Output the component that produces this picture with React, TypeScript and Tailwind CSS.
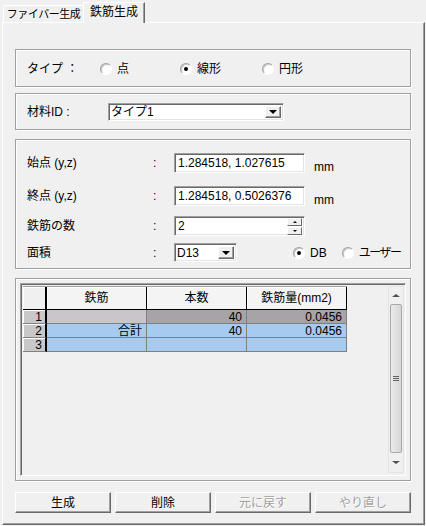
import React from 'react'

const font = "font-['Liberation_Sans','Noto_Sans_CJK_JP',sans-serif]"

/* Etched group frame used by every section */
function Group({ className = '', children }: { className?: string; children: React.ReactNode }) {
  return (
    <div
      className={`w-[396px] border border-[#a0a0a0] shadow-[inset_1px_1px_0_#ffffff,1px_1px_0_#ffffff] ${className}`}
    >
      {children}
    </div>
  )
}

function Radio({ checked = false, label, tight = false }: { checked?: boolean; label: string; tight?: boolean }) {
  return (
    <div className="flex items-center gap-[5px]">
      <div className="w-[12px] h-[12px] rounded-full border border-[#a0a0a0] border-b-white border-r-white bg-white shadow-[inset_1px_1px_0_#c8c8c8] flex items-center justify-center">
        {checked && <div className="w-[4px] h-[4px] rounded-full bg-black" />}
      </div>
      <span className={tight ? 'tracking-[-1.5px] whitespace-nowrap' : 'whitespace-nowrap'}>{label}</span>
    </div>
  )
}

/* Sunken white edit box */
function Sunken({ className = '', children }: { className?: string; children?: React.ReactNode }) {
  return (
    <div
      className={`bg-white border border-[#a0a0a0] border-b-white border-r-white shadow-[inset_1px_1px_0_#696969,inset_-1px_-1px_0_#e3e3e3] flex items-center ${className}`}
    >
      {children}
    </div>
  )
}

function DropButton() {
  return (
    <div className="w-[16px] self-stretch my-[2px] mr-[2px] bg-[#f0f0f0] border border-white border-b-[#696969] border-r-[#696969] shadow-[inset_-1px_-1px_0_#a0a0a0] flex items-center justify-center">
      <div className="w-0 h-0 border-l-[4px] border-r-[4px] border-t-[4px] border-l-transparent border-r-transparent border-t-black" />
    </div>
  )
}

function Combo({ className = '', value }: { className?: string; value: string }) {
  return (
    <Sunken className={className}>
      <span className="flex-1 pl-[2px] leading-none">{value}</span>
      <DropButton />
    </Sunken>
  )
}

function Btn({ label, disabled = false }: { label: string; disabled?: boolean }) {
  return (
    <div
      className={`w-[96px] h-[21px] bg-[#f0f0f0] border border-white border-b-[#696969] border-r-[#696969] shadow-[inset_-1px_-1px_0_#a0a0a0] flex items-center justify-center ${
        disabled ? 'text-[#a0a0a0] [text-shadow:1px_1px_0_#ffffff]' : 'text-black'
      }`}
    >
      {label}
    </div>
  )
}

const rows = [
  { n: '1', a: '', b: '40', c: '0.0456', kind: 'gray' },
  { n: '2', a: '合計', b: '40', c: '0.0456', kind: 'blue' },
  { n: '3', a: '', b: '', c: '', kind: 'blue' },
]

function Grid() {
  return (
    <div className="grid grid-cols-[24px_100px_100px_100px] grid-rows-[23px_14px_14px_14px] border-t border-[#a0a0a0] text-[12px] leading-none">
      <div className="bg-[#f0f0f0] border-r-2 border-b border-black shadow-[inset_1px_1px_0_#ffffff]" />
      {['鉄筋', '本数', '鉄筋量(mm2)'].map((h) => (
        <div
          key={h}
          className="bg-[#f4f4f4] border-r border-b border-black shadow-[inset_1px_1px_0_#ffffff] flex items-center justify-center"
        >
          {h}
        </div>
      ))}
      {rows.map((r) => (
        <React.Fragment key={r.n}>
          <div className="bg-[#c8c8c8] border-r-2 border-r-black border-b border-b-[#808080] shadow-[inset_1px_1px_0_#ffffff] flex items-center justify-end pr-[3px]">
            {r.n}
          </div>
          <div
            className={`border-r border-b border-[#808080] flex items-center justify-end pr-[4px] ${
              r.kind === 'gray' ? 'bg-[#c8c6c8]' : 'bg-[#a6caf0]'
            }`}
          >
            {r.a}
          </div>
          <div
            className={`border-r border-b border-[#808080] flex items-center justify-end pr-[4px] ${
              r.kind === 'gray' ? 'bg-[#a6a4a6]' : 'bg-[#a6caf0]'
            }`}
          >
            {r.b}
          </div>
          <div
            className={`border-r border-b border-[#808080] flex items-center justify-end pr-[4px] ${
              r.kind === 'gray' ? 'bg-[#a6a4a6]' : 'bg-[#a6caf0]'
            }`}
          >
            {r.c}
          </div>
        </React.Fragment>
      ))}
    </div>
  )
}

function ScrollBar() {
  return (
    <div className="w-[16px] self-stretch flex flex-col border border-[#e3e3e3] bg-[#f0f0f0]">
      <div className="h-[17px] flex items-center justify-center">
        <div className="w-0 h-0 border-l-[4px] border-r-[4px] border-b-[3px] border-l-transparent border-r-transparent border-b-[#505050]" />
      </div>
      <div className="flex-1 mx-px rounded-[2px] border border-[#a8a8a8] bg-gradient-to-r from-[#eaeaea] to-[#d6d6d6] flex flex-col items-center justify-center gap-[1px]">
        <div className="w-[6px] h-px bg-[#606060]" />
        <div className="w-[6px] h-px bg-[#606060]" />
        <div className="w-[6px] h-px bg-[#606060]" />
      </div>
      <div className="h-[19px] flex items-center justify-center">
        <div className="w-0 h-0 border-l-[4px] border-r-[4px] border-t-[3px] border-l-transparent border-r-transparent border-t-[#505050]" />
      </div>
    </div>
  )
}

function FieldRow({ label, children }: { label: string; children: React.ReactNode }) {
  return (
    <div className="flex items-center">
      <span className="w-[126px]">{label}</span>
      <span className="w-[21px]">:</span>
      {children}
    </div>
  )
}

export default function App() {
  return (
    <div className={`w-[426px] h-[526px] bg-[#f0f0f0] text-[12px] text-black ${font} overflow-hidden`}>
      {/* Tabs */}
      <div className="h-[22px] flex items-end pl-[3px]">
        <div className="w-[80px] h-[17px] border-t border-l border-white flex items-center justify-center whitespace-nowrap text-[11px] tracking-[-0.5px]">
          ファイバー生成
        </div>
        <div className="relative z-10 -mb-px w-[62px] h-[21px] bg-[#f0f0f0] border-t border-l border-white border-r border-r-[#696969] shadow-[inset_-1px_0_0_#a0a0a0] flex items-center justify-center pb-[2px] whitespace-nowrap">
          鉄筋生成
        </div>
      </div>

      {/* Tab page */}
      <div className="ml-[2px] w-[423px] h-[503px] border border-white border-r-[#696969] border-b-[#696969] shadow-[inset_-1px_-1px_0_#a0a0a0] flex flex-col pl-[12px] pt-[26px]">
        <Group className="h-[38px] flex items-center pl-[11px] pt-[2px]">
          <span className="w-[73px]">タイプ ：</span>
          <div className="w-[80px]">
            <Radio label="点" />
          </div>
          <div className="w-[82px]">
            <Radio checked label="線形" />
          </div>
          <Radio label="円形" />
        </Group>

        <Group className="mt-[6px] h-[37px] flex items-center pl-[11px]">
          <span className="w-[81px]">材料ID :</span>
          <Combo className="w-[176px] h-[18px]" value="タイプ1" />
        </Group>

        <Group className="mt-[9px] h-[130px] flex flex-col pl-[11px] pt-[9px]">
          <FieldRow label="始点 (y,z)">
            <Sunken className="w-[131px] h-[20px] pl-[3px]">1.284518, 1.027615</Sunken>
            <span className="ml-[9px] mt-[9px]">mm</span>
          </FieldRow>
          <div className="mt-[6px]">
            <FieldRow label="終点 (y,z)">
              <Sunken className="w-[131px] h-[20px] pl-[3px]">1.284518, 0.5026376</Sunken>
              <span className="ml-[9px] mt-[9px]">mm</span>
            </FieldRow>
          </div>
          <div className="mt-[7px]">
            <FieldRow label="鉄筋の数">
              <Sunken className="w-[131px] h-[20px] pl-[3px]">
                <span className="flex-1">2</span>
                <div className="flex flex-col gap-px mr-[2px]">
                  <div className="w-[15px] h-[8px] bg-[#f0f0f0] border border-white border-b-[#696969] border-r-[#696969] flex items-center justify-center">
                    <div className="w-0 h-0 border-l-[2px] border-r-[2px] border-b-[2px] border-l-transparent border-r-transparent border-b-black" />
                  </div>
                  <div className="w-[15px] h-[8px] bg-[#f0f0f0] border border-white border-b-[#696969] border-r-[#696969] flex items-center justify-center">
                    <div className="w-0 h-0 border-l-[2px] border-r-[2px] border-t-[2px] border-l-transparent border-r-transparent border-t-black" />
                  </div>
                </div>
              </Sunken>
            </FieldRow>
          </div>
          <div className="mt-[7px]">
            <FieldRow label="面積">
              <Combo className="w-[63px] h-[19px]" value="D13" />
              <div className="ml-[56px] flex items-center gap-[15px]">
                <Radio checked label="DB" />
                <Radio label="ユーザー" tight />
              </div>
            </FieldRow>
          </div>
        </Group>

        <Group className="mt-[9px] h-[203px] p-[4px]">
          <div className="h-full border border-[#a0a0a0] border-b-white border-r-white shadow-[inset_1px_1px_0_#696969] flex justify-between p-[2px] pr-px">
            <Grid />
            <ScrollBar />
          </div>
        </Group>

        <div className="mt-[11px] flex gap-[4px]">
          <Btn label="生成" />
          <Btn label="削除" />
          <Btn label="元に戻す" disabled />
          <Btn label="やり直し" disabled />
        </div>
      </div>
    </div>
  )
}
